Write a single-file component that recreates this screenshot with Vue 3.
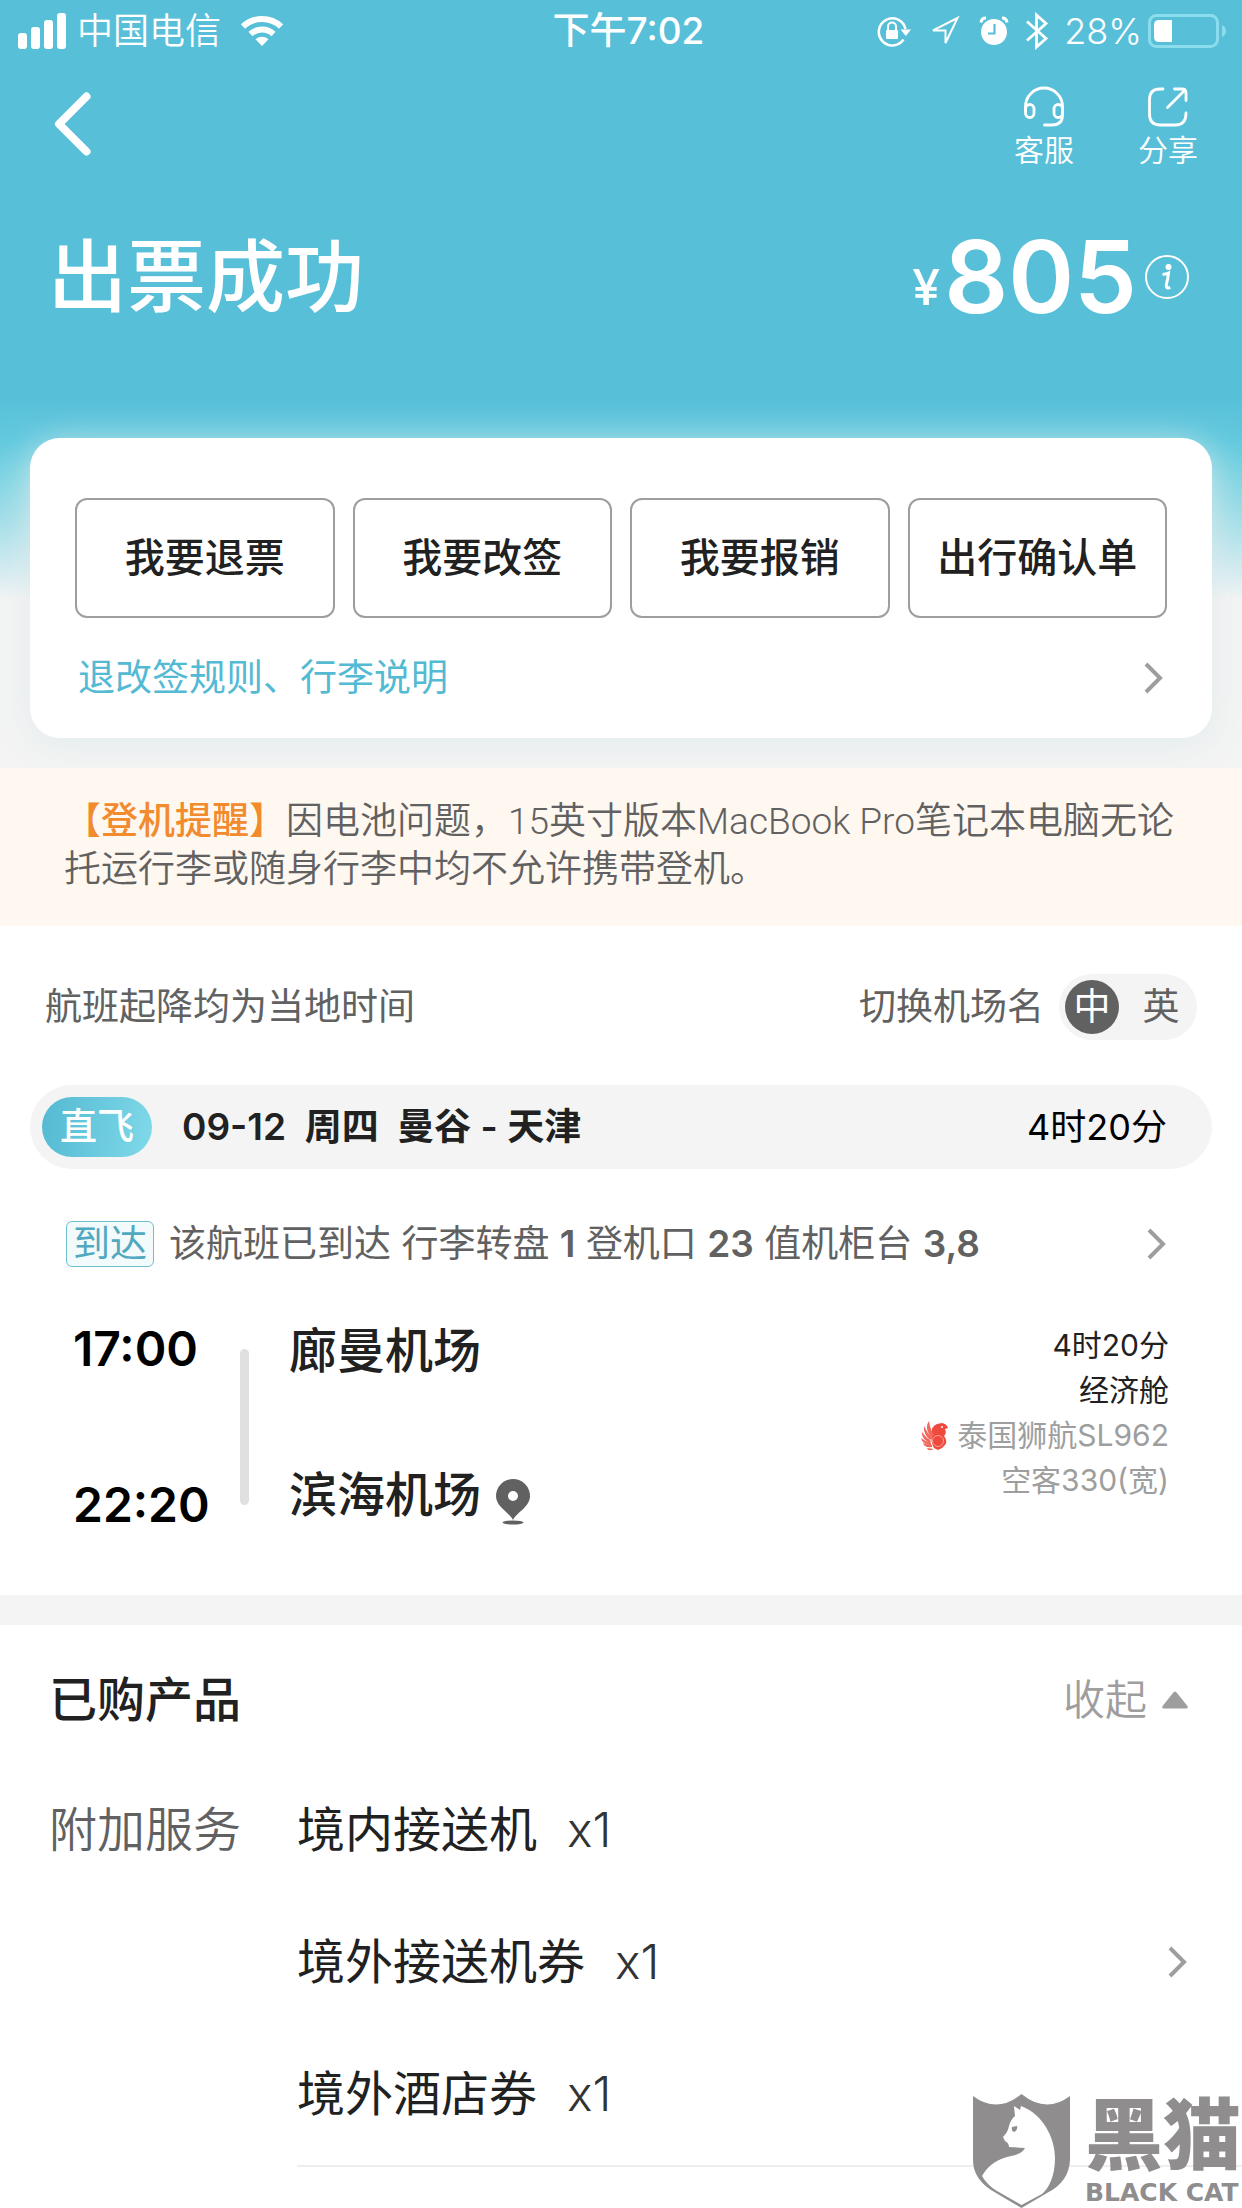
<script setup>
import { ref } from 'vue'

const actions = ['我要退票', '我要改签', '我要报销', '出行确认单']
const language = ref('zh')
const languages = [
  { value: 'zh', label: '中' },
  { value: 'en', label: '英' },
]
const services = [
  { name: '境内接送机', count: 'x1', more: false },
  { name: '境外接送机券', count: 'x1', more: true },
  { name: '境外酒店券', count: 'x1', more: false },
]
</script>

<template>
  <div class="page">
    <header class="hero">
      <div class="status">
        <div class="status-side">
          <svg class="signal" viewBox="0 0 50 36" width="50" height="36" fill="#fff">
            <rect x="0" y="20" width="9" height="16" rx="3" />
            <rect x="13" y="14" width="9" height="22" rx="3" />
            <rect x="26" y="7" width="9" height="29" rx="3" />
            <rect x="39" y="0" width="9" height="36" rx="3" />
          </svg>
          <span class="carrier">中国电信</span>
          <svg class="wifi" viewBox="0 0 42 30" width="42" height="30" fill="none" stroke="#fff">
            <path d="M2 10.5C12.500 .6 29.500 .6 40 10.500" stroke-width="6" />
            <path d="M9.500 18C16 12 26 12 32.500 18" stroke-width="6" />
            <path d="M21 30l-6.500-6.800c3.800-3.300 9.200-3.300 13 0z" fill="#fff" stroke="none" />
          </svg>
        </div>
        <time class="clock">下午7:02</time>
        <div class="status-side status-right">
          <svg viewBox="0 0 34 32" width="34" height="32">
            <path d="M26.500 24.500A13.500 13.500 0 1 1 28.500 14" fill="none" stroke="#fff" stroke-width="2.500" />
            <path d="M23.500 14.500h10.500l-5.200 6.500z" fill="#fff" />
            <path d="M11 16v-4.500a4 4 0 0 1 8 0V16" fill="none" stroke="#fff" stroke-width="2" />
            <rect x="9" y="15" width="12" height="9" rx="1" fill="#fff" />
          </svg>
          <svg class="locate" viewBox="0 0 32 32" width="32" height="32">
            <path d="M28.500 3L4 15.400h12.500v12.600z" fill="none" stroke="#fff" stroke-width="2" />
          </svg>
          <svg class="alarm" viewBox="0 0 30 30" width="30" height="30">
            <circle cx="15" cy="16" r="13" fill="#fff" />
            <path d="M2 6.500Q2.500 2 7 2M28 6.500Q27.500 2 23 2" fill="none" stroke="#fff" stroke-width="3" />
            <path d="M15.500 8v9.500H9" fill="none" stroke="#58bfd9" stroke-width="2.200" />
          </svg>
          <svg class="bluetooth" viewBox="0 0 24 38" width="24" height="38">
            <path d="M2 9.500l19 17-9.500 8.500V3L21 11.500 2 28.500" fill="none" stroke="#fff" stroke-width="2.800" />
          </svg>
          <span class="percent">28%</span>
          <svg class="battery" viewBox="0 0 79 34" width="79" height="34">
            <rect x="1.500" y="1.500" width="68" height="31" rx="7" fill="none" stroke="#8bdcec" stroke-width="3" />
            <path d="M6 11q0-5 5-5h13v22H11q-5 0-5-5z" fill="#fff" />
            <path d="M74 11q4 2 4 6t-4 6z" fill="#8bdcec" />
          </svg>
        </div>
      </div>

      <nav class="toolbar">
        <button class="back" type="button" aria-label="返回">
          <svg viewBox="0 0 37 64" width="37" height="64">
            <path d="M32.500 4.500L5 32l27.500 27.500" fill="none" stroke="#fff" stroke-width="8" stroke-linecap="round" stroke-linejoin="round" />
          </svg>
        </button>
        <div class="tools">
          <button class="tool" type="button">
            <svg viewBox="0 0 42 42" width="42" height="42" fill="none" stroke="#fff" stroke-width="2.800" stroke-linecap="round">
              <path d="M2.500 26V20.500a18.500 18.500 0 0 1 37 0V29q0 10-10.500 10h-7.500" />
              <rect x="2.500" y="18.500" width="8.500" height="13" rx="4.200" />
              <rect x="31" y="18.500" width="8.500" height="13" rx="4.200" />
            </svg>
            <span>客服</span>
          </button>
          <button class="tool" type="button">
            <svg viewBox="0 0 42 42" width="42" height="42" fill="none" stroke="#fff" stroke-width="2.800" stroke-linecap="round" stroke-linejoin="round">
              <path d="M16 3H13Q2.500 3 2.500 14v14Q2.500 39 13 39h15.500Q39 39 39 27" />
              <path d="M27.500 3H35q4 0 4 4v7.500M20.500 21.500L37.500 4.500" />
            </svg>
            <span>分享</span>
          </button>
        </div>
      </nav>

      <div class="headline">
        <h1>出票成功</h1>
        <div class="price">
          <span class="yen">¥</span><strong>805</strong>
          <button class="info" type="button" aria-label="价格说明">
            <svg viewBox="0 0 44 44" width="44" height="44">
              <circle cx="22" cy="22" r="21" fill="none" stroke="#fff" stroke-width="2" />
              <circle cx="23.500" cy="12" r="3" fill="#fff" />
              <path d="M17.500 19.500q4-.3 6-1.500-.5 5-2.200 12-.8 4 4 2.500" fill="none" stroke="#fff" stroke-width="3" />
            </svg>
          </button>
        </div>
      </div>

      <section class="card">
        <div class="actions">
          <button v-for="a in actions" :key="a" type="button">{{ a }}</button>
        </div>
        <a class="rules" href="#rules">
          <span>退改签规则、行李说明</span>
          <svg class="chevron" viewBox="0 0 20 32" width="20" height="32"><path d="M2 2l14 14L2 30" /></svg>
        </a>
      </section>
    </header>

    <p class="notice"><b>【登机提醒】</b>因电池问题，15英寸版本MacBook Pro笔记本电脑无论托运行李或随身行李中均不允许携带登机。</p>

    <main>
      <section class="flight">
        <div class="hint">
          <span>航班起降均为当地时间</span>
          <fieldset class="switch">
            <legend class="hidden">机场名语言</legend>
            <span>切换机场名</span>
            <div class="pill">
              <label v-for="l in languages" :key="l.value" :class="{ on: language === l.value }">
                <input v-model="language" class="hidden" type="radio" name="language" :value="l.value" />{{ l.label }}
              </label>
            </div>
          </fieldset>
        </div>

        <div class="route">
          <span class="direct">直飞</span>
          <h2>09-12&nbsp; 周四&nbsp; 曼谷 - 天津</h2>
          <span class="duration">4时20分</span>
        </div>

        <a class="arrival" href="#arrival">
          <span class="badge">到达</span>
          <span class="detail">该航班已到达 行李转盘 <b>1</b> 登机口 <b>23</b> 值机柜台 <b>3,8</b></span>
          <svg class="chevron" viewBox="0 0 20 32" width="20" height="32"><path d="M2 2l14 14L2 30" /></svg>
        </a>

        <div class="trip">
          <div class="times"><time>17:00</time><time>22:20</time></div>
          <i class="line"></i>
          <div class="airports">
            <span>廊曼机场</span>
            <span class="with-pin">滨海机场
              <svg viewBox="0 0 34 46" width="34" height="46" fill="#616161">
                <path fill-rule="evenodd" d="M17 41C13 33 0 28 0 17a17 17 0 0 1 34 0c0 11-13 16-17 24zM17 12a5 5 0 1 0 0 10 5 5 0 0 0 0-10z" />
                <ellipse cx="17" cy="43.500" rx="10.500" ry="2" />
              </svg>
            </span>
          </div>
          <ul class="meta">
            <li>4时20分</li>
            <li>经济舱</li>
            <li class="soft">
              <svg viewBox="0 0 28 30" width="28" height="30">
                <path d="M11 13q-1-8 5-10l5-1q5 1 6 5l-3 1q2 4-1 7 4 5 1 9-3 4-7 5l-4-2q-4-7-2-14z" fill="#f04a3e" />
                <path d="M10 16C5 10 5 4 8 0q1 8 5 14zM9 19Q2 13 3 5q3 7 8 12zM9 22Q0 18 1 11q4 6 9 9zM10 24Q1 23 0 17q5 4 10 5zM11 26Q3 27 2 22q4 2 9 2zM13 28Q7 31 6 27z" fill="#f2695c" />
                <circle cx="17" cy="20" r="5.500" fill="none" stroke="#f9a193" />
                <circle cx="21" cy="6" r="1" fill="#fff" />
              </svg>
              泰国狮航SL962
            </li>
            <li class="soft">空客330(宽)</li>
          </ul>
        </div>
      </section>

      <section class="products">
        <div class="products-head">
          <h2>已购产品</h2>
          <button class="fold" type="button">
            收起
            <svg viewBox="0 0 26 18" width="26" height="18"><path d="M11 2q2-3 4 0l10 12.500q2 3-1 3H2q-3 0-1-3z" fill="#9e9e9e" /></svg>
          </button>
        </div>
        <div class="extras">
          <span class="group">附加服务</span>
          <ul class="items">
            <li v-for="s in services" :key="s.name">
              <span>{{ s.name }}</span>
              <span class="count">{{ s.count }}</span>
              <svg v-if="s.more" class="chevron" viewBox="0 0 20 32" width="20" height="32"><path d="M2 2l14 14L2 30" /></svg>
            </li>
          </ul>
        </div>
      </section>
    </main>

    <aside class="stamp">
      <svg viewBox="0 0 97 114" width="97" height="114">
        <path fill="#8f8d8e" d="M0 2Q24 20 48.500 0 73 20 97 2V66Q96 88 74 99L48.500 114 18 96Q0 84 0 66z" />
        <path fill="#fff" d="M42 22l-1-10 6 4 1-4C70 20 82 44 82 64 82 82 76 94 69 100L48.500 111 24 97Q14 91 9 82 18 66 38 62 49 60 52 54L36 53Q36 49 32 47L30 43Q35 38 36 32 38 25 42 22z" />
        <path fill="#8f8d8e" d="M39 33l5-1q1 4-3 6-3-1-2-5z" />
      </svg>
      <div class="stamp-text">
        <span class="stamp-zh">黑猫</span>
        <span class="stamp-en">BLACK CAT</span>
      </div>
    </aside>
  </div>
</template>

<style>
body {
  margin: 0;
  background: #fff;
}
</style>

<style scoped>
.page {
  position: relative;
  min-height: 100vh;
  overflow: hidden;
  box-sizing: border-box;
  background: #fff;
  color: #212121;
  font-family: Inter, "Noto Sans CJK SC", sans-serif;
  font-size: 37px;
  line-height: 48px;
}
button {
  margin: 0;
  padding: 0;
  border: 0;
  background: none;
  color: inherit;
  font: inherit;
}
a {
  color: inherit;
  text-decoration: none;
}
svg {
  display: block;
  flex: none;
}
h1,
h2,
p,
ul,
fieldset {
  margin: 0;
  padding: 0;
  border: 0;
  list-style: none;
}
.hidden {
  position: absolute;
  width: 1px;
  height: 1px;
  margin: 0;
  opacity: 0;
  overflow: hidden;
}
.chevron {
  margin-left: auto;
  fill: none;
  stroke: #9e9e9e;
  stroke-width: 4px;
}

.hero {
  padding-bottom: 30px;
  background: linear-gradient(#58bfd9 0, #58bfd9 395px, #61c9de 440px, #7fd5e3 480px, #abe1ea 530px, #d8edf2 575px, #f4f4f4 600px);
  color: #fff;
}
.status {
  display: flex;
  align-items: center;
  height: 62px;
  padding: 0 15px 0 18px;
  font-size: 36px;
}
.status-side {
  flex: 1;
  display: flex;
  align-items: center;
}
.status-right {
  justify-content: flex-end;
}
.carrier {
  margin: 0 20px 0 9px;
  font-weight: 350;
}
.clock {
  margin-left: 12px;
  font-size: 37px;
  font-weight: 500;
}
.locate {
  margin: 0 18px;
}
.bluetooth {
  margin: 0 15px 0 16px;
}
.percent {
  margin-right: 6px;
  font-weight: 300;
}

.toolbar {
  display: flex;
  justify-content: space-between;
  align-items: flex-start;
  padding: 24px 44px 0 54px;
}
.back {
  margin-top: 6px;
}
.tools {
  display: flex;
  gap: 64px;
}
.tool {
  display: flex;
  flex-direction: column;
  align-items: center;
  gap: 4px;
  font-size: 30px;
  font-weight: 350;
  line-height: 36px;
}

.headline {
  display: flex;
  justify-content: space-between;
  align-items: center;
  height: 120px;
  margin-top: 49px;
  padding: 0 53px 0 48px;
}
.headline h1 {
  font-size: 79px;
  font-weight: 500;
  line-height: 96px;
}
.price {
  display: flex;
  align-items: center;
  font-size: 50px;
  font-weight: 500;
}
.price strong {
  margin: 0 8px 0 4px;
  font-size: 100px;
  font-weight: 600;
  line-height: 120px;
}
.yen {
  padding-top: 20px;
  line-height: 60px;
}

.card {
  margin: 101px 30px 0;
  padding: 60px 45px 36px;
  border-radius: 30px;
  background: #fff;
  box-shadow: 0 6px 36px rgba(224, 234, 235, 0.9);
}
.actions {
  display: flex;
  gap: 18px;
}
.actions button {
  flex: 1;
  height: 120px;
  border: 2px solid #9e9e9e;
  border-radius: 12px;
  color: #212121;
  font-size: 40px;
  font-weight: 500;
}
.rules {
  display: flex;
  align-items: center;
  margin-top: 36px;
  padding-left: 3px;
  padding-right: 3px;
  color: #53bad4;
}

.notice {
  padding: 30px 44px 32px 64px;
  background: #fff8f1;
  color: #616161;
  font-family: Roboto, "Noto Sans CJK SC", sans-serif;
  font-weight: 350;
}
.notice b {
  color: #f28a2e;
  font-weight: 500;
}

.flight {
  padding: 48px 30px 60px;
  border-bottom: 30px solid #f4f4f4;
}
.hint {
  display: flex;
  justify-content: space-between;
  align-items: center;
  padding: 0 15px;
  color: #616161;
}
.switch {
  display: flex;
  align-items: center;
  gap: 15px;
}
.switch > span {
  white-space: nowrap;
}
.pill {
  display: flex;
  gap: 15px;
  padding: 6px 9px 6px 6px;
  border-radius: 33px;
  background: #f4f4f4;
}
.pill label {
  width: 54px;
  height: 54px;
  border-radius: 50%;
  line-height: 54px;
  text-align: center;
}
.pill .on {
  background: #616161;
  color: #fff;
}

.route {
  display: flex;
  align-items: center;
  height: 84px;
  margin-top: 45px;
  padding: 0 45px 0 12px;
  border-radius: 42px;
  background: #f4f4f4;
}
.direct {
  width: 110px;
  border-radius: 30px;
  background: linear-gradient(100deg, #53b9d2, #80d9e9);
  color: #fff;
  font-weight: 500;
  line-height: 60px;
  text-align: center;
}
.route h2 {
  margin-left: 30px;
  font-size: 37px;
  font-weight: 600;
}
.duration {
  margin-left: auto;
  color: #000;
  font-size: 36px;
}

.arrival {
  display: flex;
  align-items: center;
  margin-top: 51px;
  padding: 0 45px 0 36px;
  color: #616161;
}
.badge {
  padding: 0 6px;
  border: 1px solid #6cc0d0;
  border-radius: 6px;
  background: #f3fafc;
  color: #50a9be;
  line-height: 44px;
}
.detail {
  margin-left: 15px;
}
.detail b {
  font-weight: 600;
}

.trip {
  display: flex;
  align-items: flex-start;
  margin-top: 51px;
  padding: 0 43px;
  font-size: 48px;
  line-height: 60px;
}
.times {
  display: flex;
  flex-direction: column;
  gap: 96px;
  width: 167px;
  color: #000;
  font-weight: 600;
}
.line {
  width: 9px;
  height: 156px;
  margin-top: 30px;
  border-radius: 5px;
  background: #e0e0e0;
}
.airports {
  display: flex;
  flex-direction: column;
  gap: 84px;
  margin: 2px 0 0 40px;
  font-weight: 500;
}
.with-pin {
  display: flex;
  align-items: flex-end;
  gap: 15px;
}
.meta {
  margin: 4px 0 0 auto;
  font-size: 30px;
  line-height: 45px;
  text-align: right;
}
.meta li {
  display: flex;
  justify-content: flex-end;
  align-items: center;
  gap: 8px;
}
.soft {
  color: #9e9e9e;
}

.products {
  padding: 45px 54px 42px 49px;
}
.products-head {
  display: flex;
  justify-content: space-between;
  align-items: center;
}
.products-head h2 {
  font-size: 48px;
  font-weight: 500;
  line-height: 60px;
}
.fold {
  display: flex;
  align-items: center;
  gap: 15px;
  color: #9e9e9e;
  font-size: 42px;
  font-weight: 350;
}
.extras {
  display: flex;
  margin-top: 34px;
  font-size: 48px;
  line-height: 132px;
}
.group {
  width: 248px;
  color: #616161;
  font-weight: 350;
}
.items {
  flex: 1;
  margin-right: -54px;
  padding: 0 54px 5px 0;
  border-bottom: 2px solid #eee;
}
.items li {
  display: flex;
  align-items: center;
}
.count {
  margin-left: 30px;
  color: #333;
  font-weight: 300;
}

.stamp {
  position: absolute;
  right: 0;
  bottom: 1px;
  display: flex;
  align-items: flex-end;
  gap: 15px;
  color: #8f8d8e;
}
.stamp-text {
  display: flex;
  flex-direction: column;
  width: 157px;
}
.stamp-zh {
  font-size: 78px;
  font-weight: 900;
  line-height: 84px;
}
.stamp-en {
  font-family: "DejaVu Sans", sans-serif;
  font-size: 25px;
  font-weight: 700;
  line-height: 30px;
  white-space: nowrap;
}
</style>
